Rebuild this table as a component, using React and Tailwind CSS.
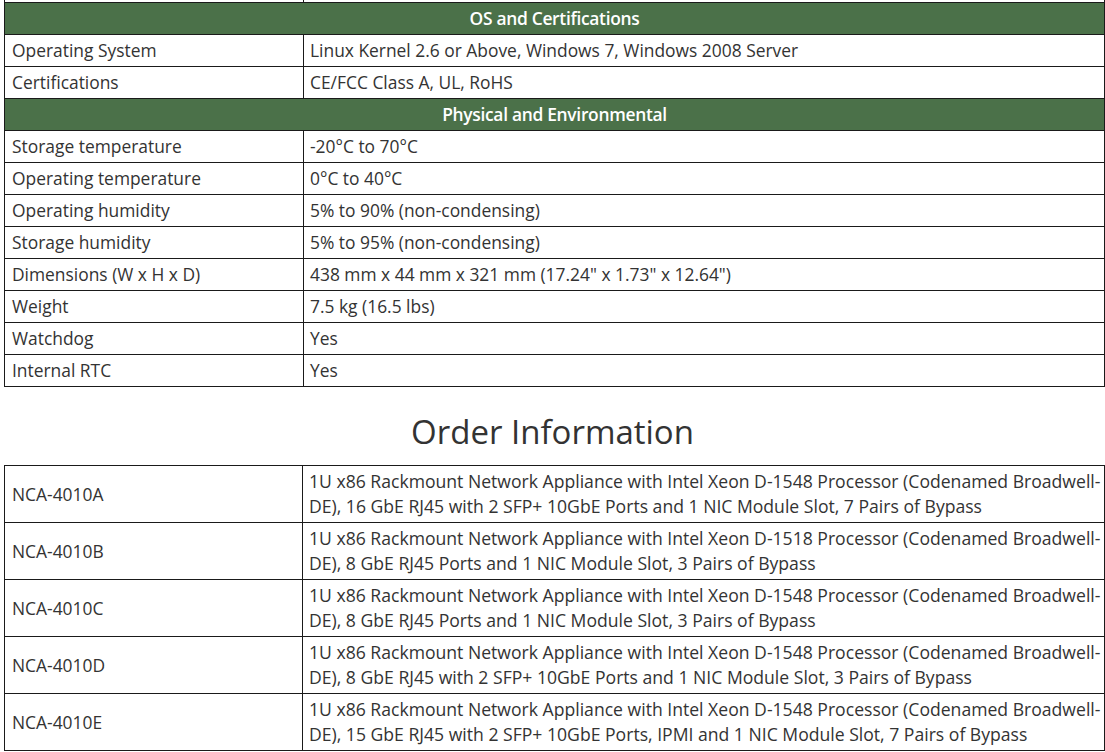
const specs = [
    { section: 'OS and Certifications' },
    { label: 'Operating System', value: 'Linux Kernel 2.6 or Above, Windows 7, Windows 2008 Server' },
    { label: 'Certifications', value: 'CE/FCC Class A, UL, RoHS' },
    { section: 'Physical and Environmental' },
    { label: 'Storage temperature', value: '-20°C to 70°C' },
    { label: 'Operating temperature', value: '0°C to 40°C' },
    { label: 'Operating humidity', value: '5% to 90% (non-condensing)' },
    { label: 'Storage humidity', value: '5% to 95% (non-condensing)' },
    { label: 'Dimensions (W x H x D)', value: '438 mm x 44 mm x 321 mm (17.24" x 1.73" x 12.64")' },
    { label: 'Weight', value: '7.5 kg (16.5 lbs)' },
    { label: 'Watchdog', value: 'Yes' },
    { label: 'Internal RTC', value: 'Yes' },
];

const orders = [
    {
        sku: 'NCA-4010A',
        lines: [
            '1U x86 Rackmount Network Appliance with Intel Xeon D-1548 Processor (Codenamed Broadwell-',
            'DE), 16 GbE RJ45 with 2 SFP+ 10GbE Ports and 1 NIC Module Slot, 7 Pairs of Bypass',
        ],
    },
    {
        sku: 'NCA-4010B',
        lines: [
            '1U x86 Rackmount Network Appliance with Intel Xeon D-1518 Processor (Codenamed Broadwell-',
            'DE), 8 GbE RJ45 Ports and 1 NIC Module Slot, 3 Pairs of Bypass',
        ],
    },
    {
        sku: 'NCA-4010C',
        lines: [
            '1U x86 Rackmount Network Appliance with Intel Xeon D-1548 Processor (Codenamed Broadwell-',
            'DE), 8 GbE RJ45 Ports and 1 NIC Module Slot, 3 Pairs of Bypass',
        ],
    },
    {
        sku: 'NCA-4010D',
        lines: [
            '1U x86 Rackmount Network Appliance with Intel Xeon D-1548 Processor (Codenamed Broadwell-',
            'DE), 8 GbE RJ45 with 2 SFP+ 10GbE Ports and 1 NIC Module Slot, 3 Pairs of Bypass',
        ],
    },
    {
        sku: 'NCA-4010E',
        lines: [
            '1U x86 Rackmount Network Appliance with Intel Xeon D-1548 Processor (Codenamed Broadwell-',
            'DE), 15 GbE RJ45 with 2 SFP+ 10GbE Ports, IPMI and 1 NIC Module Slot, 7 Pairs of Bypass',
        ],
    },
];

export default function App() {
    return (
        <div
            className="w-[1105px] h-[752px] overflow-hidden bg-white text-[#333] text-[17.4px]"
            style={{ fontFamily: '"Open Sans", "Liberation Sans", sans-serif' }}
        >
            <div className="ml-[4px] w-[1101px]">
                {/* Spec table (continued from above) */}
                <div className="border-l border-r border-[#1a1a1a]">
                    {/* cut-off row */}
                    <div className="grid grid-cols-[299px_1fr] h-[3px] border-b border-[#1a1a1a]">
                        <div className="border-r border-[#1a1a1a]" />
                        <div />
                    </div>

                    {specs.map((row, i) =>
                        row.section ? (
                            <div
                                key={i}
                                className="h-[32px] bg-[#4b7149] text-white font-semibold text-center leading-[31px] border-b border-[#1a1a1a] tracking-[-0.3px]"
                            >
                                {row.section}
                            </div>
                        ) : (
                            <div key={i} className="grid grid-cols-[299px_1fr] h-[32px] border-b border-[#1a1a1a] leading-[31px]">
                                <div className="px-[7px] border-r border-[#1a1a1a] whitespace-nowrap">{row.label}</div>
                                <div className="px-[6px] whitespace-nowrap">{row.value}</div>
                            </div>
                        )
                    )}
                </div>

                {/* Order Information */}
                <h2 className="text-center text-[33px] font-normal leading-none pt-[28px] pb-[17px] text-[#333] -ml-[4px]">
                    Order Information
                </h2>

                <div className="border border-[#1a1a1a] border-b-0">
                    {orders.map((o) => (
                        <div key={o.sku} className="grid grid-cols-[298px_1fr] h-[57px] border-b border-[#1a1a1a]">
                            <div className="px-[7px] border-r border-[#1a1a1a] flex items-center">{o.sku}</div>
                            <div className="px-[6px] pt-[3px] leading-[25px] whitespace-nowrap text-[17.6px]">
                                {o.lines.map((l) => (
                                    <div key={l}>{l}</div>
                                ))}
                            </div>
                        </div>
                    ))}
                </div>
            </div>
        </div>
    );
}
